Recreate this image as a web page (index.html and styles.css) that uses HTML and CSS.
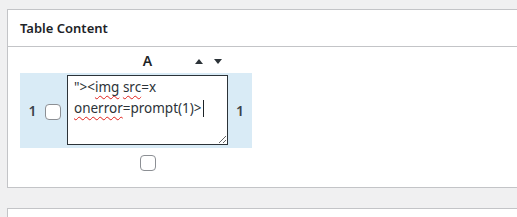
FILE: index.html
```html
<!DOCTYPE html>
<html>
<head>
<title>Table Content</title>
<link rel="stylesheet" href="styles.css">
</head>
<body>

<div class="postbox">
  <h2 class="hndle">Table Content</h2>
  <div class="inside">
    <table class="edit-table">
      <thead>
        <tr>
          <th class="num"></th>
          <th class="chk"></th>
          <th class="col">A <span class="sort"><span class="up"></span><span class="down"></span></span></th>
          <th class="num right"></th>
        </tr>
      </thead>
      <tbody>
        <tr class="active">
          <td class="num">1</td>
          <td class="chk"><span class="checkbox"></span></td>
          <td class="col">
            <div class="cell-edit">"&gt;&lt;<span class="typo">img</span> <span class="typo">src</span>=x <span class="typo">onerror</span>=prompt(1)&gt;<span class="caret"></span></div>
          </td>
          <td class="num right">1</td>
        </tr>
      </tbody>
      <tfoot>
        <tr>
          <td class="num"></td>
          <td class="chk"></td>
          <td class="col"><span class="checkbox"></span></td>
          <td class="num right"></td>
        </tr>
      </tfoot>
    </table>
  </div>
</div>

<div class="postbox next"></div>

</body>
</html>
```

FILE: styles.css
```css
html, body {
  height: 217px;
  overflow: hidden;
}

body {
  margin: 0;
  padding: 9px 0 0 7px;
  box-sizing: border-box;
  background: #f0f0f1;
  font-family: "Noto Sans", "Open Sans", sans-serif;
  font-size: 14px;
  color: #1d2327;
}

.postbox {
  background: #fff;
  border: 1px solid #c3c4c7;
  border-right: none;
}

.postbox.next {
  margin-top: 20px;
  height: 10px;
  border-bottom: none;
}

.hndle {
  margin: 0;
  height: 36px;
  line-height: 36px;
  padding: 0 12px;
  font-size: 13px;
  font-weight: 600;
  border-bottom: 1px solid #c3c4c7;
}

.inside {
  padding: 0 12px 16px 12px;
}

.edit-table {
  border-collapse: collapse;
  border-spacing: 0;
  table-layout: fixed;
}

.edit-table td, .edit-table th {
  padding: 0;
}

.edit-table thead th {
  height: 26px;
  font-weight: 600;
  font-size: 14px;
  position: relative;
  vertical-align: middle;
}

.sort {
  position: absolute;
  right: 6px;
  top: 12px;
  display: flex;
  gap: 11px;
}

.up, .down {
  width: 0;
  height: 0;
  border-left: 4px solid transparent;
  border-right: 4px solid transparent;
}

.up {
  border-bottom: 5px solid #2c3338;
}

.down {
  border-top: 5px solid #2c3338;
}

.num {
  width: 25px;
  text-align: center;
  font-weight: 600;
  color: #3c434a;
}

.num.right {
  width: 24px;
}

.chk {
  width: 22px;
}

.col {
  width: 161px;
  text-align: center;
}

.edit-table .active td {
  background: #d9ebf6;
  padding: 2px 0 3px 0;
  vertical-align: middle;
}

.checkbox {
  display: inline-block;
  width: 14px;
  height: 14px;
  border: 1px solid #8c8f94;
  border-radius: 4px;
  background: #fff;
  vertical-align: middle;
}

.cell-edit {
  box-sizing: border-box;
  width: 161px;
  height: 70px;
  border: 1px solid #2c3338;
  background: #fff;
  padding: 1px 6px;
  font-size: 13.5px;
  line-height: 21px;
  text-align: left;
  color: #2c3338;
  overflow: hidden;
  resize: both;
}

.typo {
  text-decoration: underline wavy #e0201b;
  text-decoration-thickness: 1px;
  text-underline-offset: 3px;
}

.caret {
  display: inline-block;
  width: 1px;
  height: 17px;
  background: #1d2327;
  vertical-align: -4px;
  margin-left: 1px;
}

.edit-table tfoot td {
  padding-top: 7px;
  line-height: 0;
}

tfoot .checkbox {
  display: block;
  margin: 0 auto;
}
```
